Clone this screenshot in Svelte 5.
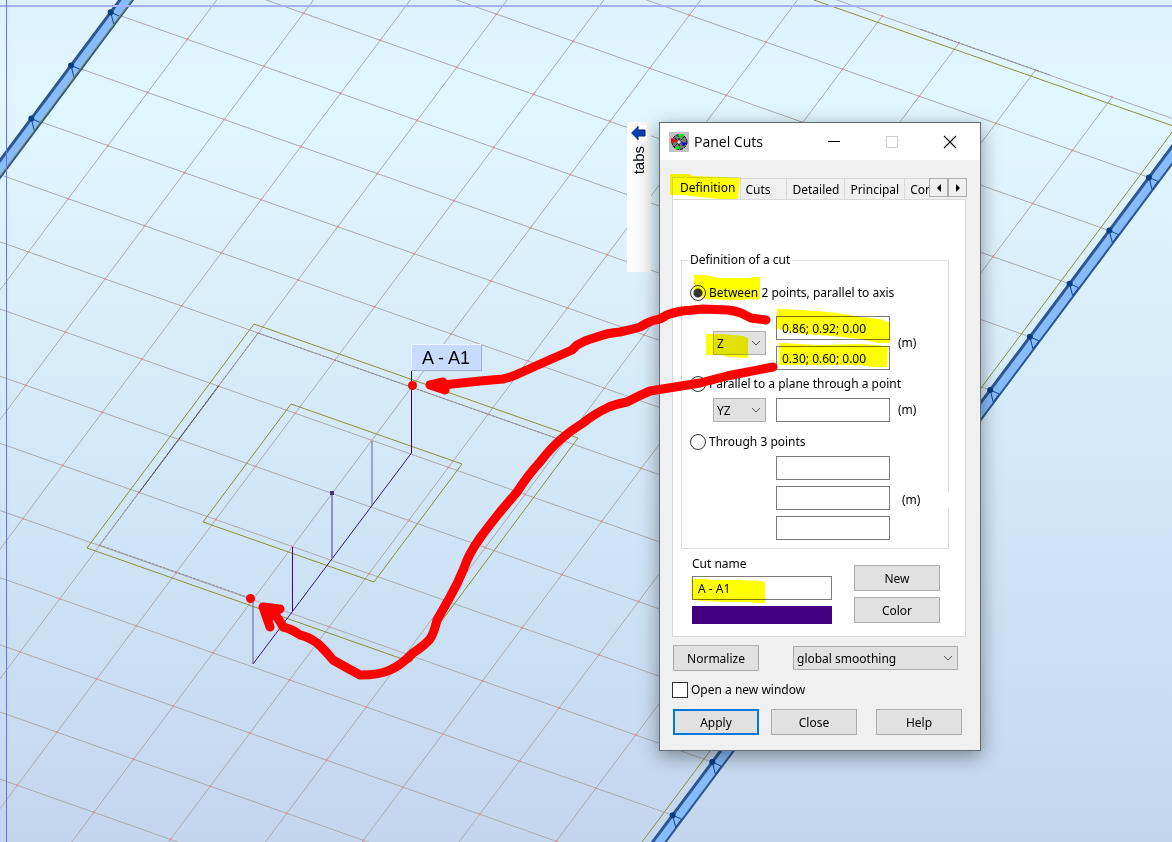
<!--
  Panel Cuts

  Structure view with the "Panel Cuts" dialog on top, plus marker notes.
-->

<script lang="ts">
	interface Point {
		x: number;
		y: number;
	}

	// Projected grid: origin node plus the two step vectors
	const origin: Point = { x: 187.3, y: 39.3 };
	const stepU: Point = { x: 76.6, y: 27.05 };
	const stepV: Point = { x: -39.7, y: 53.15 };

	const uMin = -1;
	const uMax = 11;
	const vMin = -4;
	const vMax = 24;

	function node(u: number, v: number): Point {
		return {
			x: origin.x + u * stepU.x + v * stepV.x,
			y: origin.y + u * stepU.y + v * stepV.y
		};
	}

	function range(from: number, to: number): number[] {
		return Array.from({ length: to - from + 1 }, (_, i) => from + i);
	}

	const lines = [
		...range(uMin + 1, uMax - 1).map((u) => [node(u, vMin), node(u, vMax)]),
		...range(vMin, vMax).map((v) => [node(uMin, v), node(uMax, v)])
	];

	const crosses = range(uMin + 1, uMax - 1).flatMap((u) => range(vMin, vMax).map((v) => node(u, v)));

	const beams = [uMin, uMax].map((u) => ({
		start: node(u, vMin),
		end: node(u, vMax),
		supports: range(vMin + 1, vMax).map((v) => node(u, v))
	}));

	const ordinates = [
		{ x: 411.5, y1: 386, y2: 453, color: '#300080' },
		{ x: 372, y1: 441, y2: 506, color: '#5f6298' },
		{ x: 332, y1: 493, y2: 558, color: '#4d3a90' },
		{ x: 292.5, y1: 547, y2: 611, color: '#43007f' },
		{ x: 253, y1: 600, y2: 664, color: '#5a5aa0' }
	];

	const highlights = [
		'670,174 690,174 692,176 720,177 740,178 738,199 720,199 700,197 683,195 670,195',
		'694,275 705,275 720,278 750,278 752,277 760,277 760,299 735,300 703,299 701,291 694,290',
		'706,334 722,334 743,336 748,338 748,358 728,357 722,355 706,355',
		'777,309 803,310 837,313 860,317 880,319 890,323 890,343 878,343 860,339 833,336 803,334 777,329',
		'779,343 820,345 860,344 888,346 887,367 872,367 860,365 779,365',
		'692,579 708,579 708,580 737,580 760,581 765,582 765,603 753,603 750,602 728,602 702,601 692,599'
	];

	const tabs = ['Definition', 'Cuts', 'Detailed', 'Principal', 'Con'];
	let activeTab = 'Definition';

	let mode = 'between';
	let axis = 'Z';
	let plane = 'YZ';
	let from = '0.86; 0.92; 0.00';
	let to = '0.30; 0.60; 0.00';
	let planePoint = '';
	let points = ['', '', ''];
	let cutName = 'A - A1';
	let smoothing = 'global smoothing';
	let newWindow = false;
</script>

<main class="view">
	<svg class="layer" aria-hidden="true">
		{#each lines as [a, b]}
			<line class="grid" x1={a.x} y1={a.y} x2={b.x} y2={b.y} />
		{/each}
		{#each crosses as p}
			<rect class="cross" x={p.x - 1} y={p.y - 1} width="2" height="2" />
		{/each}

		{#each beams as beam}
			<polygon
				class="beam"
				points={`${beam.start.x - 1},${beam.start.y} ${beam.start.x + 14},${beam.start.y} ${beam.end.x + 14},${beam.end.y} ${beam.end.x - 1},${beam.end.y}`}
			/>
			<line class="flange wide" x1={beam.start.x} y1={beam.start.y} x2={beam.end.x} y2={beam.end.y} />
			<line class="flange" x1={beam.start.x + 13} y1={beam.start.y} x2={beam.end.x + 13} y2={beam.end.y} />
			{#each beam.supports as p}
				<path class="support" d={`M${p.x} ${p.y}l9 4M${p.x} ${p.y}l3 12l6 -8`} />
				<circle class="support-node" cx={p.x} cy={p.y} r="3" />
			{/each}
		{/each}
		<path class="dash olive" d="M132 0L0 176" />

		<path class="dash olive" d="M814 0L1176 127L642 842" />
		<path class="dash olive" d="M254 324L578 438L411 662L87 548Z" />
		<path class="dash olive" d="M291 404L462 464L374 582L203 522Z" />
		<path class="dash ink" d="M218.500 386L139 492.500" />
		<path class="dash soft" d="M258 333L99.500 545L250 598M258 333L564 441M920 29L1050 75" />

		<path class="section" d="M411.500 453L253 664" />
		{#each ordinates as o}
			<line x1={o.x} y1={o.y1} x2={o.x} y2={o.y2} stroke={o.color} stroke-width="1" />
		{/each}
		<rect x="330" y="491" width="4" height="4" fill="#4a2f92" />
		<path d="M411.500 369V386" stroke="#111" />

		<path d="M0 6H3000" stroke="#a3aff9" stroke-width="2" />
		<path d="M6.500 0V2000" stroke="#686eff" stroke-width="1" />
	</svg>

	<div class="cut-label">A - A1</div>

	<aside class="side-tab">
		<button class="side-arrow" aria-label="Show tabs">
			<svg width="16" height="16" viewBox="0 0 16 16">
				<path d="M0 8L7 1V5H14V11H7V15Z" fill="#0a3fb5" />
				<path d="M7 1V5H14V11H7V15" fill="none" stroke="#06226e" />
			</svg>
		</button>
		<span>tabs</span>
	</aside>

	<section class="dialog" aria-label="Panel Cuts">
		<header class="title-bar">
			<svg class="app-icon" width="20" height="20" viewBox="0 0 20 20" aria-hidden="true">
				<path d="M0 0H20V20H0Z" fill="#c0c0c0" />
				<circle cx="10.500" cy="10" r="7.500" fill="#777" stroke="#000" stroke-dasharray="3 1" />
				<path d="M4 5L16 15M15 5L5 15M10 3V17" stroke="#000" stroke-dasharray="2 1" />
				<circle cx="10" cy="10" r="2" fill="#ddd" stroke="#222" stroke-width="0.500" />
				<path d="M9 2H15L11 7Z" fill="#00f020" />
				<path d="M5 17L9 13L11 17Z" fill="#00f020" />
				<path d="M2 6L9 9L2 11Z" fill="#f00" />
				<path d="M12 10L18 11L15 14Z" fill="#00f" />
			</svg>
			<h1>Panel Cuts</h1>
			<button class="caption" aria-label="Minimize">
				<svg width="14" height="14" viewBox="0 0 14 14"><path d="M1 6.500H13" stroke="#000" /></svg>
			</button>
			<button class="caption" aria-label="Maximize" disabled>
				<svg width="14" height="14" viewBox="0 0 14 14">
					<path d="M1.500 1.500H12.500V12.500H1.500Z" fill="none" stroke="#ccc" />
				</svg>
			</button>
			<button class="caption" aria-label="Close window">
				<svg width="14" height="14" viewBox="0 0 14 14">
					<path d="M1 1L13 13M13 1L1 13" stroke="#000" stroke-width="1.200" />
				</svg>
			</button>
		</header>

		<div class="body">
			<div class="tab-bar">
				<div class="tabs" role="tablist">
					{#each tabs as tab}
						<button
							class="tab"
							class:active={tab === activeTab}
							role="tab"
							aria-selected={tab === activeTab}
							on:click={() => (activeTab = tab)}>{tab}</button
						>
					{/each}
				</div>
				<button class="scroll" aria-label="Scroll tabs left">
					<svg width="8" height="8" viewBox="0 0 8 8"><path d="M6 0V8L2 4Z" /></svg>
				</button>
				<button class="scroll" aria-label="Scroll tabs right">
					<svg width="8" height="8" viewBox="0 0 8 8"><path d="M2 0V8L6 4Z" /></svg>
				</button>
			</div>

			<div class="panel">
				<fieldset>
					<legend>Definition of a cut</legend>

					<label class="option">
						<input type="radio" name="mode" value="between" bind:group={mode} />
						Between 2 points, parallel to axis
					</label>
					<div class="fields first">
						<div class="select">
							<select bind:value={axis} aria-label="Axis">
								<option>X</option>
								<option>Y</option>
								<option>Z</option>
							</select>
							<svg width="10" height="6" viewBox="0 0 10 6"><path d="M1 1L5 5L9 1" /></svg>
						</div>
						<div class="stack">
							<input type="text" bind:value={from} aria-label="First point" />
							<input type="text" bind:value={to} aria-label="Second point" />
						</div>
						<span class="unit">(m)</span>
					</div>

					<label class="option">
						<input type="radio" name="mode" value="plane" bind:group={mode} />
						Parallel to a plane through a point
					</label>
					<div class="fields second">
						<div class="select">
							<select bind:value={plane} aria-label="Plane">
								<option>XY</option>
								<option>XZ</option>
								<option>YZ</option>
							</select>
							<svg width="10" height="6" viewBox="0 0 10 6"><path d="M1 1L5 5L9 1" /></svg>
						</div>
						<div class="stack">
							<input type="text" bind:value={planePoint} aria-label="Point on plane" />
						</div>
						<span class="unit">(m)</span>
					</div>

					<label class="option">
						<input type="radio" name="mode" value="three" bind:group={mode} />
						Through 3 points
					</label>
					<div class="fields third">
						<div class="stack">
							{#each points as _, i}
								<input type="text" bind:value={points[i]} aria-label={`Point ${i + 1}`} />
							{/each}
						</div>
						<span class="unit wide-unit">(m)</span>
					</div>
				</fieldset>

				<div class="naming">
					<div class="name-column">
						<label for="cut-name">Cut name</label>
						<input id="cut-name" type="text" bind:value={cutName} />
						<div class="swatch"></div>
					</div>
					<div class="name-actions">
						<button class="push">New</button>
						<button class="push">Color</button>
					</div>
				</div>
			</div>

			<div class="row spread">
				<button class="push">Normalize</button>
				<div class="select smoothing">
					<select bind:value={smoothing} aria-label="Smoothing">
						<option>no smoothing</option>
						<option>global smoothing</option>
					</select>
					<svg width="10" height="6" viewBox="0 0 10 6"><path d="M1 1L5 5L9 1" /></svg>
				</div>
			</div>
			<label class="check">
				<input type="checkbox" bind:checked={newWindow} />
				Open a new window
			</label>
			<div class="row actions">
				<button class="push default">Apply</button>
				<button class="push">Close</button>
				<button class="push help">Help</button>
			</div>
		</div>
	</section>

	<!-- Marker pen notes -->
	<svg class="layer marks" aria-hidden="true">
		{#each highlights as area}
			<polygon points={area} fill="#ffff00" />
		{/each}
	</svg>
	<svg class="layer notes" aria-hidden="true">
		<path
			d="M766 320L751 318Q745 315 741 313Q736 311 728 310L703 309L682 311Q672 313 667 315L660 319Q653 320 647 323L640 327Q630 330 620 332Q607 333 597 337Q590 339 585 341L577 345L572 350L547 361L520 373Q512 377 503 379Q492 380 480 381L443 385L430 385L443 382M430 385L445 390"
		/>
		<path
			d="M773 367L727 376L700 383L650 391Q638 396 627 402Q612 405 607 408Q594 414 583 423Q570 431 560 440Q550 449 540 462Q528 475 517 492L500 512Q488 527 480 538Q468 555 464 568Q458 583 450 597L437 620Q434 633 430 639Q425 645 413 653Q400 666 390 670Q380 675 360 675Q347 668 333 660Q324 649 317 643Q309 637 300 635Q292 629 283 627Q279 619 275 615L263 607L280 609M263 607L270 627M265 609L276 614M268 611L270 617"
		/>
		<circle cx="412.500" cy="385.500" r="4.500" />
		<circle cx="250.500" cy="598.500" r="4.500" />
	</svg>
</main>

<style>
	:global(body) {
		margin: 0;
	}

	.view {
		position: relative;
		min-height: 100vh;
		overflow: hidden;
		background: linear-gradient(#dcf1fd 0%, #e1f7ff 11%, #dbeffb 33%, #cfe4f6 64%, #c4d6ee 100%);
		color: #000;
		font: 12px/16px 'Noto Sans', sans-serif;
	}

	.layer {
		position: absolute;
		inset: 0;
		width: 100%;
		height: 100%;
		pointer-events: none;
	}

	.grid {
		stroke: #aaabad;
		stroke-width: 1;
	}

	.cross {
		fill: #ee8f8f;
	}

	.beam {
		fill: #86bcfb;
	}

	.flange {
		stroke: #2f578f;
		stroke-width: 2;
	}

	.flange.wide {
		stroke-width: 3;
	}

	.support {
		fill: none;
		stroke: #10468c;
		stroke-width: 1;
	}

	.support-node {
		fill: #083f82;
	}

	.dash {
		fill: none;
		stroke-width: 1;
	}

	.olive {
		stroke: #8b8f35;
	}

	.ink {
		stroke: #222;
	}

	.soft {
		stroke: #888c90;
		stroke-dasharray: 3 1;
	}

	.section {
		fill: none;
		stroke: #35158a;
	}

	.cut-label {
		position: absolute;
		left: 411px;
		top: 344px;
		padding: 2px 11px 1px 10px;
		border: 1px solid;
		border-color: #eef4ff #a0aec8 #a0aec8 #eef4ff;
		background: #c9dcff;
		font: 18px/22px 'Liberation Sans', sans-serif;
		white-space: nowrap;
	}

	.side-tab {
		position: absolute;
		left: 627px;
		top: 122px;
		box-sizing: border-box;
		display: flex;
		flex-direction: column;
		align-items: center;
		gap: 5px;
		width: 24px;
		height: 150px;
		padding-top: 3px;
		background: linear-gradient(90deg, #fff, #f0f0f2);
		font: 15px/18px 'Liberation Sans', sans-serif;
	}

	.side-tab span {
		writing-mode: vertical-rl;
		transform: rotate(180deg);
	}

	button {
		padding: 0;
		border: 0;
		background: none;
		color: inherit;
		font: inherit;
	}

	.side-arrow {
		display: flex;
		background: #fff;
	}

	.dialog {
		position: absolute;
		left: 659px;
		top: 122px;
		width: 320px;
		border: 1px solid #626a72;
		background: #f0f0f0;
		box-shadow: 0 5px 18px rgba(0, 0, 0, 0.4);
	}

	.title-bar {
		display: flex;
		align-items: center;
		height: 37px;
		padding: 0 1px 0 9px;
		background: #fff;
	}

	h1 {
		flex: 1;
		margin: 0 0 0 5px;
		font: 14px/20px 'Open Sans', sans-serif;
	}

	.caption {
		display: grid;
		place-items: center;
		width: 58px;
		height: 37px;
	}

	.body {
		padding: 17px 14px 15px 12px;
	}

	.tab-bar {
		display: flex;
		align-items: flex-end;
		height: 22px;
		margin-right: -1px;
	}

	.tabs {
		display: flex;
		flex: 1;
		align-items: flex-end;
		overflow: hidden;
	}

	.tab {
		flex: none;
		box-sizing: border-box;
		height: 21px;
		padding: 2px 5px 0;
		border: 1px solid #d9d9d9;
		border-width: 1px 1px 0 0;
	}

	.tab:nth-child(2) {
		padding: 2px 16px 0 4px;
	}

	.tab.active {
		height: 22px;
		padding: 0 5px 1px 7px;
		border-left-width: 1px;
		background: #fff;
	}

	.scroll {
		display: grid;
		flex: none;
		place-items: center;
		box-sizing: border-box;
		align-self: flex-start;
		width: 19px;
		height: 19px;
		margin-top: 1px;
		border: 1px solid #adadad;
		background: #efefef;
	}

	.panel {
		padding: 52px 16px 12px 8px;
		border: 1px solid #d9d9d9;
		background: #fff;
	}

	fieldset {
		min-width: 0;
		margin: 0;
		padding: 17px 0 8px 8px;
		border: 1px solid #dcdcdc;
	}

	legend {
		padding: 0 2px;
		margin-left: -2px;
	}

	.option,
	.check {
		display: flex;
		align-items: center;
		gap: 3px;
		height: 16px;
		white-space: nowrap;
	}

	input[type='radio'],
	input[type='checkbox'] {
		appearance: none;
		flex: none;
		box-sizing: border-box;
		width: 16px;
		height: 16px;
		margin: 0;
		border: 1px solid #333;
		background: #fff;
	}

	input[type='radio'] {
		border-radius: 50%;
	}

	input[type='radio']:checked {
		background: radial-gradient(circle, #333 0 4px, #fff 5px);
	}

	input[type='checkbox']:checked {
		background: #333;
		box-shadow: inset 0 0 0 3px #fff;
	}

	.fields {
		display: flex;
		align-items: center;
		padding-left: 23px;
	}

	.first {
		margin: 15px 0 6px;
	}

	.second {
		margin: 6px 0 12px;
	}

	.third {
		margin-top: 6px;
		padding-left: 86px;
	}

	.select {
		position: relative;
		width: 53px;
		margin-right: 10px;
	}

	.select svg {
		position: absolute;
		right: 5px;
		top: 9px;
		fill: none;
		stroke: #555;
		pointer-events: none;
	}

	select {
		appearance: none;
		display: block;
		box-sizing: border-box;
		width: 100%;
		height: 24px;
		padding: 1px 3px 0;
		border: 1px solid #adadad;
		border-radius: 0;
		background: #e1e1e1;
		color: inherit;
		font: inherit;
	}

	.stack {
		display: flex;
		flex-direction: column;
		gap: 6px;
		width: 114px;
	}

	input[type='text'] {
		box-sizing: border-box;
		width: 100%;
		height: 24px;
		padding: 0 5px;
		border: 1px solid #7a7a7a;
		border-radius: 0;
		background: #fff;
		color: inherit;
		font: inherit;
	}

	.unit {
		padding-left: 8px;
	}

	/* the label runs over the group box edge */
	.wide-unit {
		flex: 1;
		margin: 4px -1px 0 0;
		padding-left: 12px;
		background: #fff;
	}

	.naming {
		display: flex;
		gap: 22px;
		margin-top: 7px;
		padding-left: 11px;
	}

	.name-column {
		width: 140px;
	}

	.name-column label {
		display: block;
		margin-bottom: 4px;
	}

	.name-column input {
		display: block;
	}

	.swatch {
		height: 18px;
		margin-top: 6px;
		background: #420080;
	}

	.name-actions {
		display: flex;
		flex-direction: column;
		gap: 6px;
		padding-top: 9px;
	}

	.push {
		box-sizing: border-box;
		width: 86px;
		height: 26px;
		padding-top: 1px;
		border: 1px solid #adadad;
		background: #e1e1e1;
	}

	.push.default {
		border: 2px solid #0078d7;
	}

	.row {
		display: flex;
		align-items: center;
		padding-left: 1px;
	}

	.spread {
		justify-content: space-between;
		margin-top: 8px;
		padding-right: 8px;
	}

	.smoothing {
		width: 165px;
		margin-right: 0;
	}

	.check {
		margin: 11px 0;
	}

	.actions {
		gap: 12px;
	}

	.help {
		margin-left: 7px;
	}

	.marks {
		mix-blend-mode: multiply;
	}

	.notes path {
		fill: none;
		stroke: #f00;
		stroke-width: 9;
		stroke-linecap: round;
		stroke-linejoin: round;
	}

	.notes circle {
		fill: #f00;
	}
</style>
